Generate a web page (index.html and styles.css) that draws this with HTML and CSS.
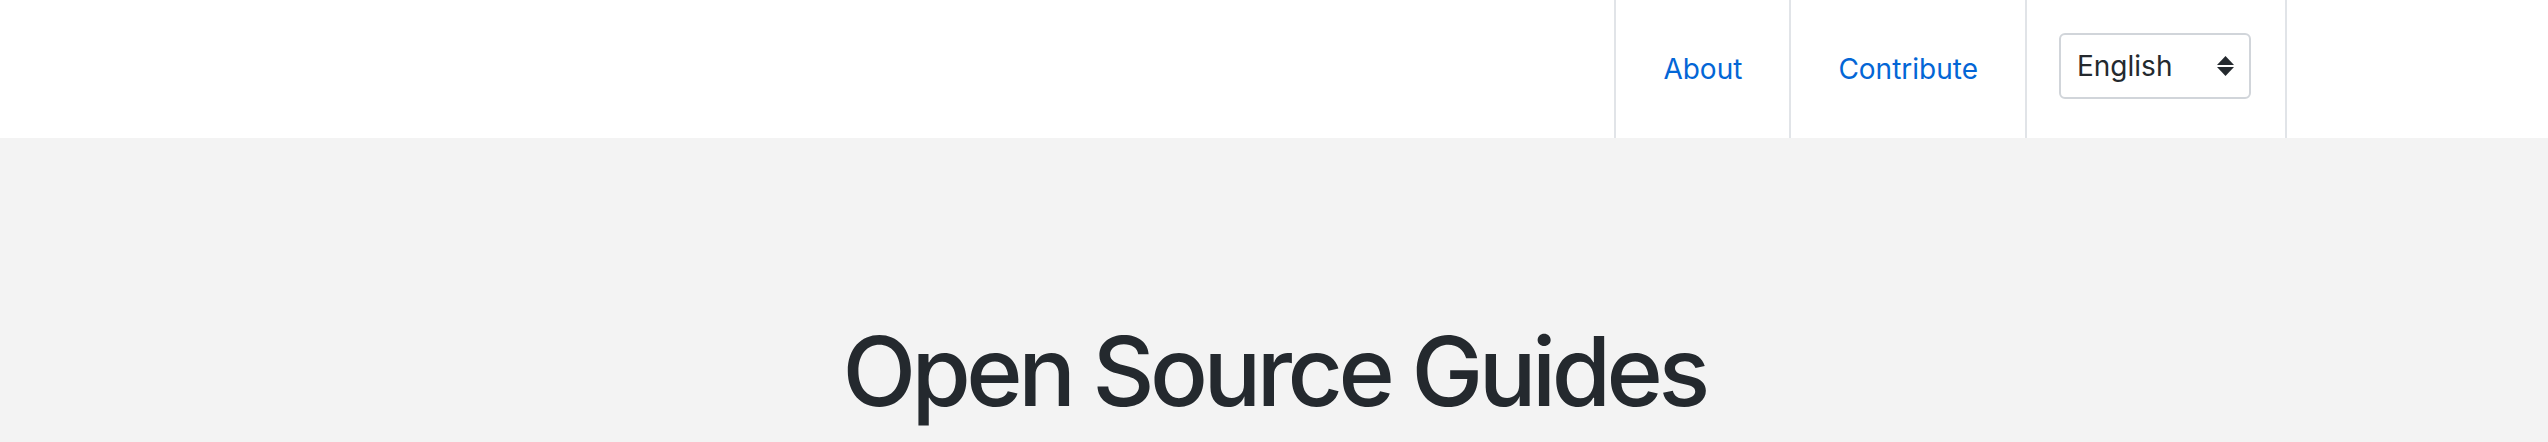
FILE: index.html
```html
<!DOCTYPE html>
<html lang="en">
<head>
<meta charset="utf-8">
<title>Open Source Guides</title>
<link rel="stylesheet" href="styles.css">
</head>
<body>
<header class="site-header">
  <div class="header-inner">
    <nav class="site-nav">
      <a class="nav-link" href="#">About</a>
      <a class="nav-link" href="#">Contribute</a>
      <div class="nav-item lang">
        <div class="select-wrap">
          <select class="lang-select" aria-label="Language">
            <option>English</option>
          </select>
          <svg class="select-arrows" width="17" height="20" viewBox="0 0 17 20" aria-hidden="true">
            <path d="M8.5 0 L17 9 L0 9 Z" fill="#24292e"/>
            <path d="M0 11 L17 11 L8.5 20 Z" fill="#24292e"/>
          </svg>
        </div>
      </div>
    </nav>
  </div>
</header>
<main class="hero">
  <h1 class="hero-title">Open Source Guides</h1>
</main>
</body>
</html>
```

FILE: styles.css
```css
html, body {
  margin: 0;
  padding: 0;
}

body {
  background: #f3f3f3;
  font-family: Inter, "Liberation Sans", Arial, sans-serif;
  color: #24292e;
}

.site-header {
  background: #ffffff;
  height: 138px;
}

.header-inner {
  max-width: 2026px;
  height: 100%;
  margin: 0 auto;
  display: flex;
  justify-content: flex-end;
}

.site-nav {
  display: flex;
  height: 100%;
  border-right: 2px solid #e1e4e8;
}

.nav-link,
.nav-item {
  display: flex;
  align-items: center;
  border-left: 2px solid #e1e4e8;
}

.nav-link {
  padding: 2px 47px 0 47px;
  font-size: 28px;
  line-height: 1.2;
  color: #0366d6;
  text-decoration: none;
}

.lang {
  padding: 0 34px 6px 32px;
}

.select-wrap {
  position: relative;
  width: 192px;
  height: 66px;
}

.lang-select {
  appearance: none;
  -webkit-appearance: none;
  box-sizing: border-box;
  width: 100%;
  height: 100%;
  margin: 0;
  padding: 0 40px 0 16px;
  border: 2px solid #d1d5da;
  border-radius: 6px;
  background: #ffffff;
  font-family: Inter, "Liberation Sans", Arial, sans-serif;
  font-size: 28px;
  color: #24292e;
}

.select-arrows {
  position: absolute;
  right: 17px;
  top: 23px;
  pointer-events: none;
}

.hero {
  padding-top: 176px;
  text-align: center;
}

.hero-title {
  margin: 0;
  font-size: 96px;
  line-height: 1.2;
  font-weight: 500;
  letter-spacing: -4.5px;
  color: #24292e;
}
```
